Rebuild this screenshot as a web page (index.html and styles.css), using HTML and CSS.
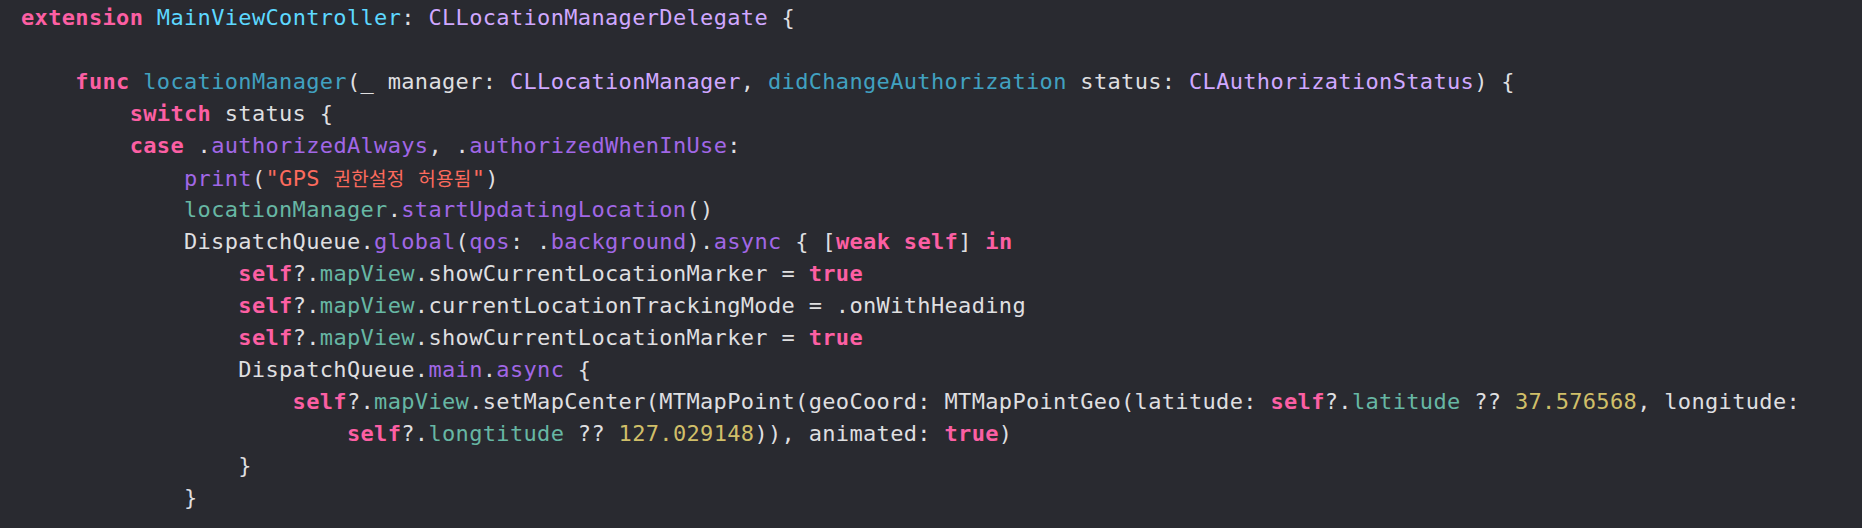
FILE: index.html
```html
<!DOCTYPE html>
<html lang="ko">
<head>
<meta charset="utf-8">
<title>MainViewController.swift</title>
<link rel="stylesheet" href="styles.css">
</head>
<body>
<div class="editor">
<div class="line"><span class="k">extension</span> <span class="td">MainViewController</span>: <span class="ot">CLLocationManagerDelegate</span> {</div>
<div class="line"> </div>
<div class="line">    <span class="k">func</span> <span class="d">locationManager</span>(_ manager: <span class="ot">CLLocationManager</span>, <span class="d">didChangeAuthorization</span> status: <span class="ot">CLAuthorizationStatus</span>) {</div>
<div class="line">        <span class="k">switch</span> status {</div>
<div class="line">        <span class="k">case</span> .<span class="f">authorizedAlways</span>, .<span class="f">authorizedWhenInUse</span>:</div>
<div class="line">            <span class="f">print</span>(<span class="s">"GPS <span class="ko">권한설정</span> <span class="ko">허용됨</span>"</span>)</div>
<div class="line">            <span class="p">locationManager</span>.<span class="f">startUpdatingLocation</span>()</div>
<div class="line">            DispatchQueue.<span class="f">global</span>(<span class="f">qos</span>: .<span class="f">background</span>).<span class="f">async</span> { [<span class="k">weak</span> <span class="k">self</span>] <span class="k">in</span></div>
<div class="line">                <span class="k">self</span>?.<span class="p">mapView</span>.showCurrentLocationMarker = <span class="k">true</span></div>
<div class="line">                <span class="k">self</span>?.<span class="p">mapView</span>.currentLocationTrackingMode = .onWithHeading</div>
<div class="line">                <span class="k">self</span>?.<span class="p">mapView</span>.showCurrentLocationMarker = <span class="k">true</span></div>
<div class="line">                DispatchQueue.<span class="f">main</span>.<span class="f">async</span> {</div>
<div class="line">                    <span class="k">self</span>?.<span class="p">mapView</span>.setMapCenter(MTMapPoint(geoCoord: MTMapPointGeo(latitude: <span class="k">self</span>?.<span class="p">latitude</span> ?? <span class="n">37.576568</span>, longitude:</div>
<div class="line">                        <span class="k">self</span>?.<span class="p">longtitude</span> ?? <span class="n">127.029148</span>)), animated: <span class="k">true</span>)</div>
<div class="line">                }</div>
<div class="line">            }</div>
</div>
</body>
</html>
```

FILE: styles.css
```css
html, body {
  margin: 0;
  padding: 0;
  background: #292a30;
}

.editor {
  background: #292a30;
  height: 528px;
  box-sizing: border-box;
  padding: 2.4px 0 0 21px;
  font-family: "DejaVu Sans Mono", "Liberation Mono", monospace;
  font-size: 22px;
  letter-spacing: 0.335px;
  line-height: 32px;
  color: #dfdfe0;
  overflow: hidden;
}

.line {
  white-space: pre;
  height: 32px;
}

.k { color: #fc5fa3; font-weight: bold; }
.td { color: #5dd8ff; }
.d { color: #41a1c0; }
.ot { color: #d0a8ff; }
.f { color: #a167e6; }
.p { color: #67b7a4; }
.s { color: #fc6a5d; }
.n { color: #d0bf69; }

.ko {
  font-family: "Noto Sans CJK KR", sans-serif;
  font-size: 19px;
}
```
